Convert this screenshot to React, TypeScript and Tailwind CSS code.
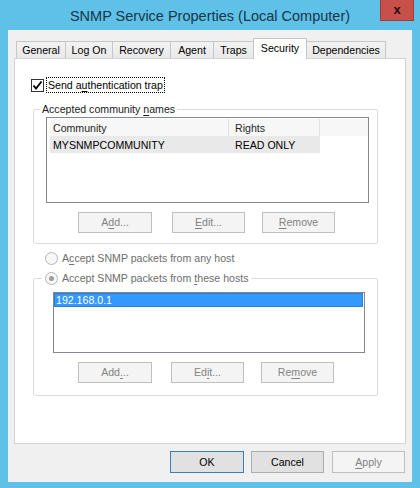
import React from "react";

const U = ({ c }: { c: string }) => (
  <span className="underline decoration-[1px] underline-offset-[2px]">{c}</span>
);

function Btn({
  children,
  className,
  disabled,
  def,
}: {
  children: React.ReactNode;
  className: string;
  disabled?: boolean;
  def?: boolean;
}) {
  const base =
    "h-[21px] flex items-center justify-center border leading-none " + className + " ";
  const look = disabled
    ? "bg-[#f4f4f4] border-[#bfbfbf] text-[#838383]"
    : def
    ? "bg-[#e1e1e1] border-[#3c7fb1] text-black"
    : "bg-[#e1e1e1] border-[#adadad] text-black";
  return <div className={base + look}>{children}</div>;
}

function Tab({
  label,
  className,
  selected,
}: {
  label: string;
  className: string;
  selected?: boolean;
}) {
  return selected ? (
    <div
      className={
        "h-[21px] -mb-px bg-white border border-b-0 border-[#c6c6c6] flex items-center justify-center -ml-px relative z-10 pb-[2px] " +
        className
      }
    >
      {label}
    </div>
  ) : (
    <div
      className={
        "h-[17px] bg-gradient-to-b from-[#f2f2f2] to-[#e9e9e9] border border-b-0 border-[#c6c6c6] flex items-center justify-center " +
        className
      }
    >
      {label}
    </div>
  );
}

export default function App() {
  return (
    <div className="w-[420px] h-[488px] bg-[#5fc1e7] flex flex-col font-['Liberation_Sans',Arial,sans-serif] text-[10.6px] text-black leading-[16px] overflow-hidden">
      {/* title bar */}
      <div className="h-[30px] relative flex items-center justify-center shrink-0">
        <span className="text-[14.5px] text-[#17364a] mt-[2px] leading-none">
          SNMP Service Properties (Local Computer)
        </span>
        <div className="absolute right-[6px] top-0 w-[34px] h-[21px] bg-[#c7504b] border border-t-0 border-[#a13d39] flex items-center justify-center">
          <span className="text-[13px] font-bold text-[#2a0c0c] leading-none -mt-[2px]">x</span>
        </div>
      </div>

      {/* client area */}
      <div className="mx-[8px] h-[452px] bg-[#f0f0f0] flex flex-col px-[6px] pt-[8px] shrink-0">
        {/* tabs */}
        <div className="h-[20px] flex items-end ml-[2px] relative z-10">
          <Tab label="General" className="w-[50px]" />
          <Tab label="Log On" className="w-[48px] -ml-px" />
          <Tab label="Recovery" className="w-[59px] -ml-px" />
          <Tab label="Agent" className="w-[44px] -ml-px" />
          <Tab label="Traps" className="w-[41px] -ml-px" />
          <Tab label="Security" className="w-[54px]" selected />
          <Tab label="Dependencies" className="w-[80px] -ml-px" />
        </div>

        {/* tab panel */}
        <div className="h-[386px] bg-white border border-[#d4d4d4] flex flex-col pt-[18px]">
          {/* checkbox row */}
          <div className="h-[16px] flex items-center ml-[16px]">
            <div className="w-[13px] h-[13px] border border-[#333333] bg-white flex items-center justify-center">
              <svg width="11" height="11" viewBox="0 0 11 11">
                <path d="M1.5 5.5 L4 8.5 L9.5 1.5" fill="none" stroke="#000" strokeWidth="1.8" />
              </svg>
            </div>
            <div className="ml-[2px] h-[16px] px-[1px] border border-dotted border-[#000] flex items-center">
              Send a<U c="u" />thentication trap
            </div>
          </div>

          {/* group 1 */}
          <fieldset className="ml-[18px] mt-[8px] w-[345px] border border-[#dcdcdc] rounded-[2px] pb-[10px]">
            <legend className="ml-[6px] px-[2px] h-[16px] leading-[16px] text-[#1a1a1a]">
              Accepted community <U c="n" />ames
            </legend>
            <div className="ml-[12px] w-[323px] h-[86px] border border-[#828790] bg-white pl-[3px] pt-[1px] flex flex-col">
              <div className="h-[17px] flex bg-[#f7f7f7] text-[#262626]">
                <div className="w-[179px] border-r border-[#e2e2e2] pl-[3px] flex items-center">Community</div>
                <div className="w-[91px] border-r border-[#e2e2e2] pl-[6px] flex items-center">Rights</div>
                <div className="flex-1" />
              </div>
              <div className="h-[17px] w-[270px] flex bg-[#e9e9e9]">
                <div className="w-[179px] pl-[3px] flex items-center">MYSNMPCOMMUNITY</div>
                <div className="w-[91px] pl-[6px] flex items-center">READ ONLY</div>
              </div>
            </div>
            <div className="flex mt-[9px]">
              <Btn disabled className="ml-[44px] w-[74px]">
                A<U c="d" />d...
              </Btn>
              <Btn disabled className="ml-[20px] w-[73px]">
                <U c="E" />dit...
              </Btn>
              <Btn disabled className="ml-[17px] w-[73px]">
                <U c="R" />emove
              </Btn>
            </div>
          </fieldset>

          {/* radio 1 */}
          <div className="h-[16px] mt-[6px] ml-[30px] flex items-center text-[#6d6d6d]">
            <div className="w-[13px] h-[13px] rounded-full border border-[#b5b5b5] bg-[#f7f7f7]" />
            <span className="ml-[4px]">
              A<U c="c" />cept SNMP packets from any host
            </span>
          </div>

          {/* group 2 */}
          <fieldset className="ml-[18px] mt-[4px] w-[345px] border border-[#dcdcdc] rounded-[2px] pb-[12px]">
            <legend className="ml-[8px] px-[3px] h-[16px] flex items-center text-[#6d6d6d]">
              <div className="w-[13px] h-[13px] rounded-full border border-[#b5b5b5] bg-[#f7f7f7] flex items-center justify-center">
                <div className="w-[5px] h-[5px] rounded-full bg-[#9d9d9d]" />
              </div>
              <span className="ml-[4px]">
                Accept SNMP packets from <U c="t" />hese hosts
              </span>
            </legend>
            <div className="ml-[19px] mt-[6px] w-[312px] h-[61px] border border-[#828790] bg-white flex flex-col">
              <div className="h-[14px] mr-[1px] bg-[#3399ff] border border-[#2a80d8] text-white pl-[1px] flex items-center">
                192.168.0.1
              </div>
            </div>
            <div className="flex mt-[9px]">
              <Btn disabled className="ml-[44px] w-[74px]">
                Add<U c="." />..
              </Btn>
              <Btn disabled className="ml-[19px] w-[73px]">
                Ed<U c="i" />t...
              </Btn>
              <Btn disabled className="ml-[17px] w-[73px]">
                Re<U c="m" />ove
              </Btn>
            </div>
          </fieldset>
        </div>

        {/* bottom buttons */}
        <div className="flex justify-end mt-[7px] pr-[1px]">
          <Btn def className="w-[74px] h-[22px]">OK</Btn>
          <Btn className="ml-[7px] w-[73px] h-[22px]">Cancel</Btn>
          <Btn disabled className="ml-[8px] w-[73px] h-[22px]">
            <U c="A" />pply
          </Btn>
        </div>
      </div>
    </div>
  );
}
